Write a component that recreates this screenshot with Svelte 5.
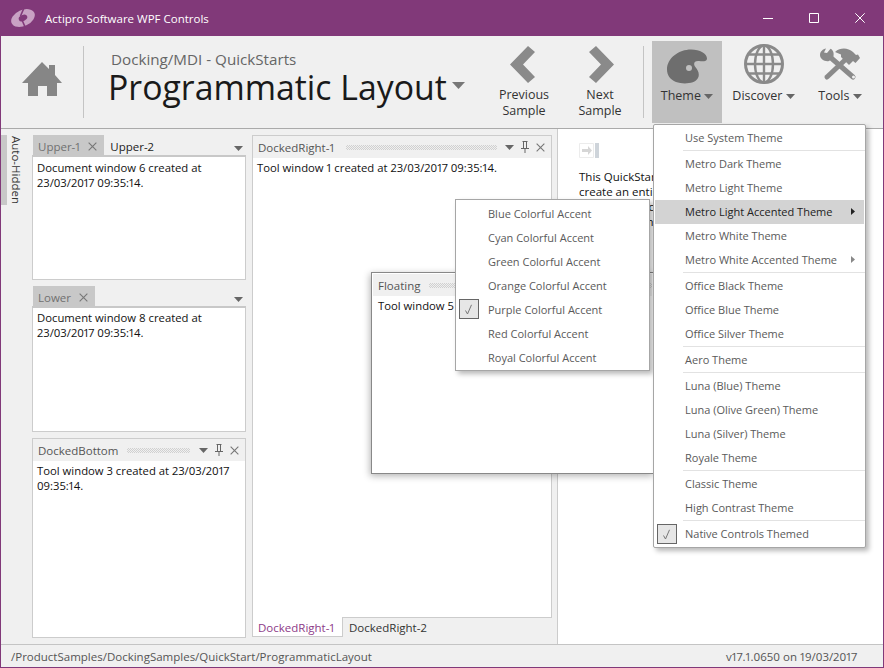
<script>
	const themeGroups = [
		[{ label: 'Use System Theme' }],
		[
			{ label: 'Metro Dark Theme' },
			{ label: 'Metro Light Theme' },
			{ label: 'Metro Light Accented Theme', sub: true, active: true },
			{ label: 'Metro White Theme' },
			{ label: 'Metro White Accented Theme', sub: true }
		],
		[{ label: 'Office Black Theme' }, { label: 'Office Blue Theme' }, { label: 'Office Silver Theme' }],
		[{ label: 'Aero Theme' }],
		[
			{ label: 'Luna (Blue) Theme' },
			{ label: 'Luna (Olive Green) Theme' },
			{ label: 'Luna (Silver) Theme' },
			{ label: 'Royale Theme' }
		],
		[{ label: 'Classic Theme' }, { label: 'High Contrast Theme' }],
		[{ label: 'Native Controls Themed', checked: true }]
	];

	const accents = [
		{ label: 'Blue Colorful Accent' },
		{ label: 'Cyan Colorful Accent' },
		{ label: 'Green Colorful Accent' },
		{ label: 'Orange Colorful Accent' },
		{ label: 'Purple Colorful Accent', checked: true },
		{ label: 'Red Colorful Accent' },
		{ label: 'Royal Colorful Accent' }
	];
</script>

{#snippet caret()}
	<svg class="caret" width="9" height="5" viewBox="0 0 9 5"><path d="M0 0h9L4.500 5z" /></svg>
{/snippet}

{#snippet pin()}
	<svg class="glyph" width="10" height="12" viewBox="0 0 10 12">
		<path d="M2.500 .5h5M3.500 .5v7M6.500 .5v7M1 7.500h8M5 7.500V12" fill="none" stroke="#666" />
	</svg>
{/snippet}

{#snippet cross(size)}
	<svg class="glyph" width={size} height={size} viewBox="0 0 10 10">
		<path d="M.7 .7l8.600 8.600M9.300 .7L.7 9.300" fill="none" stroke="#777" stroke-width="1.200" />
	</svg>
{/snippet}

{#snippet toolTitle(name, grip)}
	<div class="tool-title">
		<span class="tool-name">{name}</span>
		<span class="grip" style="width: {grip}px"></span>
		<span class="tool-btns">
			{@render caret()}
			{@render pin()}
			{@render cross(9)}
		</span>
	</div>
{/snippet}

{#snippet check()}
	<span class="check">
		<svg width="10" height="11" viewBox="0 0 10 11"><path d="M1.500 6.500l2 3.500L7.500 .8" fill="none" stroke="#777" /></svg>
	</span>
{/snippet}

<div class="window">
	<header class="titlebar">
		<svg class="logo" width="26" height="22" viewBox="0 0 26 22">
			<ellipse cx="13" cy="11" rx="12.500" ry="8" transform="rotate(-25 13 11)" fill="#c9a2c4" />
			<ellipse cx="13" cy="11" rx="4.500" ry="3" transform="rotate(-25 13 11)" fill="#813979" />
			<path d="M14 1L10.500 9M12 13L15.500 21" fill="none" stroke="#813979" stroke-width="1.600" />
		</svg>
		<span class="app-title">Actipro Software WPF Controls</span>
		<div class="win-btns">
			<svg width="10" height="10" viewBox="0 0 10 10"><path d="M0 5.500h10" stroke="#fff" /></svg>
			<svg width="10" height="10" viewBox="0 0 10 10"><path d="M.5 .5h9v9h-9z" fill="none" stroke="#fff" /></svg>
			<svg width="10" height="10" viewBox="0 0 10 10"><path d="M.3 .3l9.400 9.400M9.700 .3L.3 9.700" stroke="#fff" /></svg>
		</div>
	</header>

	<div class="toolbar">
		<button class="home" aria-label="Home">
			<svg width="40" height="34" viewBox="0 0 40 34">
				<path fill="#868686" d="M20 0L27 7V3h6v10l7 8h-5v13H25V24h-9v10H6V21H0z" />
			</svg>
		</button>
		<div class="vsep"></div>
		<div class="heading">
			<div class="subtitle">Docking/MDI - QuickStarts</div>
			<div class="title">Programmatic Layout<svg width="13" height="7" viewBox="0 0 13 7"><path fill="#777" d="M0 0h13L6.500 7z" /></svg></div>
		</div>
		<div class="nav">
			<div class="nav-btn">
				<svg class="prev" width="25" height="37" viewBox="0 0 25 37"><path fill="#8a8a8a" d="M18 0l7 6-12 12.500L25 31l-7 6L0 18.500z" /></svg>
				<span>Previous<br />Sample</span>
			</div>
			<div class="nav-btn">
				<svg class="next" width="25" height="37" viewBox="0 0 25 37"><path fill="#8a8a8a" d="M7 0L0 6l12 12.500L0 31l7 6 18-18.500z" /></svg>
				<span>Next<br />Sample</span>
			</div>
		</div>
		<div class="vsep second"></div>
		<div class="drops">
			<div class="drop open">
				<svg width="40" height="35" viewBox="0 0 40 35" class="top-icon">
					<path fill="#6e6e6e" fill-rule="evenodd" d="M24 .5C33 .5 40 4.500 40 9.500C40 13 35 12.500 32 12C27.500 11.500 26 14.500 28 17.500C31 21 33 25 31 29C28 35 16 35.500 9 33C3 30.500 0 26 0 20.500C0 9 12 .5 24 .5ZM22 16a3 3 0 100 6 3 3 0 000-6Z" />
				</svg>
				<span class="drop-label">Theme {@render caret()}</span>
			</div>
			<div class="drop">
				<svg width="40" height="40" viewBox="0 0 40 40" class="top-icon globe">
					<g fill="none" stroke="#8a8a8a" stroke-width="2.400">
						<circle cx="20" cy="20" r="18.500" stroke-width="3" />
						<ellipse cx="20" cy="20" rx="9" ry="18.500" />
						<path d="M20 1.500v37M1.500 20h37M4.500 10.500h31M4.500 29.500h31" />
					</g>
				</svg>
				<span class="drop-label">Discover {@render caret()}</span>
			</div>
			<div class="drop">
				<svg width="40" height="33" viewBox="0 0 40 33" class="top-icon tools">
					<g fill="none" stroke="#8a8a8a" stroke-width="5" stroke-linecap="round">
						<path d="M7 29L25 12" />
						<path d="M10 9L33 29" />
					</g>
					<path fill="#8a8a8a" d="M15 4C21 -1 28 0 33 4L36 7L38 6.500L40 10L35.500 15L33 13L29 17L21 9L21 6.500C19 5.500 17 5 15 4Z" />
					<path fill="#8a8a8a" d="M6 .5C3 1 0 3.500 0 7C0 11 5 14 9 13L13 10C14.500 6 13.500 2 10.500 .8L7 5L4 4.500Z" />
					<circle cx="33.500" cy="29" r="1.500" fill="#f0f0f0" />
				</svg>
				<span class="drop-label">Tools {@render caret()}</span>
			</div>
		</div>
	</div>

	<main class="body">
		<div class="rail"><span>Auto-Hidden</span></div>

		<div class="left">
			<section class="pane upper">
				<div class="tabs">
					<div class="tab on">Upper-1 {@render cross(9)}</div>
					<div class="tab">Upper-2</div>
					<span class="tabs-end">{@render caret()}</span>
				</div>
				<div class="doc">Document window 6 created at 23/03/2017 09:35:14.</div>
			</section>
			<section class="pane lower">
				<div class="tabs">
					<div class="tab on">Lower {@render cross(9)}</div>
					<span class="tabs-end">{@render caret()}</span>
				</div>
				<div class="doc">Document window 8 created at 23/03/2017 09:35:14.</div>
			</section>
			<section class="tool bottom">
				{@render toolTitle('DockedBottom', 63)}
				<div class="tool-body">Tool window 3 created at 23/03/2017 09:35:14.</div>
			</section>
		</div>

		<div class="center">
			<section class="tool right-tool">
				{@render toolTitle('DockedRight-1', 151)}
				<div class="tool-body">Tool window 1 created at 23/03/2017 09:35:14.</div>
			</section>
			<div class="bottom-tabs">
				<div class="btab on">DockedRight-1</div>
				<div class="btab">DockedRight-2</div>
			</div>
		</div>

		<div class="info">
			<svg width="21" height="15" viewBox="0 0 21 15">
				<path fill="#fff" stroke="#ececec" d="M.5 .5h14v14H.5z" />
				<path fill="#d6d6d6" d="M3 6h6V3l4 4.500L9 12V9H3z" />
				<path fill="#ced4da" d="M16 0h4v15h-4z" />
			</svg>
			<p>This QuickStart demonstrates how to<br />create an entire layout from code-behind<br />by adding docking windows into the<br />dock site in the order of your choice.</p>
		</div>
	</main>

	<footer class="status">
		<span>/ProductSamples/DockingSamples/QuickStart/ProgrammaticLayout</span>
		<span>v17.1.0650 on 19/03/2017</span>
	</footer>

	<div class="floating">
		{@render toolTitle('Floating', 420)}
		<div class="tool-body">Tool window 5 created at 23/03/2017 09:35:14.</div>
	</div>

	<div class="menu accent-menu">
		{#each accents as item}
			<div class="item">
				{#if item.checked}{@render check()}{/if}
				<span>{item.label}</span>
			</div>
		{/each}
	</div>

	<div class="menu theme-menu">
		{#each themeGroups as group, i}
			{#if i > 0}<div class="sep"></div>{/if}
			{#each group as item}
				<div class="item" class:active={item.active}>
					{#if item.checked}{@render check()}{/if}
					<span>{item.label}</span>
					{#if item.sub}
						<svg class="arrow" width="4" height="7" viewBox="0 0 4 7"><path d="M0 0l4 3.500L0 7z" fill={item.active ? '#222' : '#888'} /></svg>
					{/if}
				</div>
			{/each}
		{/each}
	</div>
</div>

<style>
	:global(body) {
		margin: 0;
	}

	.window {
		--ui: "Open Sans", "Noto Sans", sans-serif;
		position: relative;
		box-sizing: border-box;
		width: 884px;
		height: 668px;
		display: flex;
		flex-direction: column;
		overflow: hidden;
		border: 1px solid #813979;
		border-top: 0;
		background: #f0f0f0;
		font-family: var(--ui);
		font-size: 11.3px;
		font-variant-numeric: proportional-nums;
		color: #111;
	}

	.titlebar {
		height: 36px;
		flex: none;
		margin: 0 -1px;
		display: flex;
		align-items: center;
		background: #813979;
		color: #fff;
		font-size: 11.5px;
	}

	.logo {
		margin-left: 10px;
		margin-right: 9px;
	}

	.win-btns {
		margin-left: auto;
		display: flex;
		align-items: center;
		gap: 36px;
		margin-right: 19px;
	}

	.toolbar {
		height: 93px;
		flex: none;
		box-sizing: border-box;
		display: flex;
		align-items: flex-start;
		border-bottom: 1px solid #aaa;
	}

	.home {
		margin: 26px 0 0 21px;
		padding: 0;
		border: 0;
		background: none;
		display: block;
		width: 40px;
		height: 34px;
	}

	.vsep {
		width: 1px;
		height: 72px;
		margin: 10px 0 0 21px;
		background: #c4c4c4;
		flex: none;
	}

	.heading {
		margin-left: 25px;
		width: 372px;
		flex: none;
	}

	.subtitle {
		margin: 13px 0 0 2px;
		font-size: 15.2px;
		line-height: 20px;
		color: #666;
	}

	.title {
		font-size: 33.8px;
		line-height: 44px;
		color: #1a1a1a;
		display: flex;
		align-items: center;
		gap: 5px;
		margin: -4px 0 0 -1px;
		white-space: nowrap;
	}

	.title svg {
		margin-top: -4px;
	}

	.nav {
		display: flex;
		margin-left: 5px;
		flex: none;
	}

	.nav-btn {
		width: 76px;
		display: flex;
		flex-direction: column;
		align-items: center;
		padding-top: 10px;
		font-size: 12.5px;
		line-height: 16px;
		text-align: center;
		color: #333;
	}

	.nav-btn span {
		margin-top: 4px;
	}

	.prev {
		margin-right: 3px;
	}

	.next {
		margin-left: 2px;
	}

	.vsep.second {
		margin-left: 5px;
	}

	.drops {
		display: flex;
		gap: 6.5px;
		margin-left: 8px;
	}

	.drop {
		width: 70px;
		height: 82px;
		margin-top: 5px;
		display: flex;
		flex-direction: column;
		align-items: center;
		font-size: 12.5px;
		color: #333;
		position: relative;
	}

	.drop.open {
		background: #c0c0c0;
	}

	.top-icon {
		margin-top: 8px;
		flex: none;
	}

	.top-icon.globe {
		margin-top: 3px;
	}

	.top-icon.tools {
		margin-top: 7px;
		margin-bottom: 3px;
	}

	.drop-label {
		margin-top: 4px;
		line-height: 16px;
		white-space: nowrap;
	}

	.caret {
		fill: #666;
		vertical-align: 1px;
	}

	.body {
		flex: 1;
		min-height: 0;
		display: flex;
		align-items: stretch;
	}

	.rail {
		width: 6px;
		flex: none;
		height: 70px;
		margin-top: 6px;
		background: #c8c8c8;
		position: relative;
		margin-right: 25px;
	}

	.rail span {
		position: absolute;
		left: 7px;
		top: 0;
		height: 70px;
		writing-mode: vertical-rl;
		text-align: center;
		line-height: 17px;
		font-size: 11.5px;
		color: #333;
		white-space: nowrap;
	}

	.left {
		width: 214px;
		flex: none;
		padding-top: 6px;
		display: flex;
		flex-direction: column;
		gap: 6px;
	}

	.pane {
		display: flex;
		flex-direction: column;
		flex: none;
	}

	.upper {
		height: 145px;
	}

	.lower {
		height: 146px;
	}

	.tabs {
		height: 20px;
		flex: none;
		display: flex;
		align-items: center;
		padding-left: 1px;
		border-bottom: 2px solid #c8c8c8;
	}

	.tab {
		height: 20px;
		box-sizing: border-box;
		padding: 2px 7px 0 5px;
		display: flex;
		align-items: center;
		gap: 8px;
		font-size: 11.5px;
		color: #222;
	}

	.tab:not(.on) {
		padding-left: 6px;
	}

	.tab.on {
		background: #c8c8c8;
		color: #707070;
	}

	.tabs-end {
		margin-left: auto;
		margin-right: 3px;
		padding-top: 4px;
	}

	.doc,
	.tool-body {
		flex: 1;
		min-height: 0;
		background: #fff;
		padding: 2px 4px;
		line-height: 15px;
	}

	.doc {
		border: 1px solid #ccc;
		border-top: 0;
	}

	.upper .doc {
		padding-top: 3px;
	}

	.tool {
		box-sizing: border-box;
		display: flex;
		flex-direction: column;
		border: 1px solid #ccc;
		flex: none;
	}

	.bottom {
		height: 200px;
	}

	.tool-title {
		height: 22px;
		flex: none;
		display: flex;
		align-items: center;
		padding-left: 5px;
		font-size: 11.5px;
		color: #555;
		background: #f0f0f0;
		white-space: nowrap;
		overflow: hidden;
	}

	.grip {
		height: 5px;
		margin-left: 9px;
		flex: none;
		background: repeating-conic-gradient(#d0d0d0 0 25%, transparent 0 50%) 0 0 / 2px 2px;
	}

	.right-tool .grip {
		margin-left: 12px;
	}

	.tool-btns {
		margin-left: auto;
		display: flex;
		align-items: center;
		gap: 6px;
		padding-right: 6px;
	}

	.center {
		width: 306px;
		flex: none;
		margin-left: 6px;
		padding: 6px 6px 0 0;
		box-sizing: border-box;
		border-right: 1px solid #ccc;
		display: flex;
		flex-direction: column;
	}

	.right-tool {
		height: 483px;
		width: 300px;
	}

	.bottom-tabs {
		display: flex;
		height: 20px;
		margin-top: -1px;
		width: 300px;
		font-size: 11.5px;
	}

	.btab {
		padding: 0 6px;
		line-height: 21px;
		color: #333;
	}

	.btab.on {
		box-sizing: border-box;
		height: 20px;
		background: #fff;
		color: #8d3a88;
		border: 1px solid #ccc;
		border-top: 0;
		padding: 0 5px;
		width: 91px;
	}

	.info {
		flex: 1;
		background: #fff;
		padding: 14px 0 0 21px;
		white-space: nowrap;
		overflow: hidden;
		font-size: 11.5px;
	}

	.info p {
		margin: 8px 0 0;
		line-height: 15px;
	}

	.status {
		height: 23px;
		flex: none;
		box-sizing: border-box;
		display: flex;
		justify-content: space-between;
		align-items: center;
		padding: 0 26px 0 10px;
		background: #f0f0f0;
		border-top: 1px solid #c4c4c4;
		font-size: 11.5px;
		color: #555;
	}

	.floating {
		position: absolute;
		left: 370px;
		top: 272px;
		width: 283px;
		height: 202px;
		box-sizing: border-box;
		background: #fff;
		border: 1px solid #888;
		box-shadow: -1px 2px 7px rgba(0, 0, 0, 0.3);
		padding: 1px;
		white-space: nowrap;
	}

	.floating .tool-body {
		padding-left: 5px;
	}

	.menu {
		position: absolute;
		box-sizing: border-box;
		background: #fff;
		border: 1px solid #a6a6a6;
		box-shadow: 3px 3px 5px rgba(0, 0, 0, 0.28);
		padding: 2px 0;
		font-size: 11px;
		color: #5a5a5a;
	}

	.accent-menu {
		left: 454px;
		top: 199px;
		width: 195px;
		height: 172px;
	}

	.theme-menu {
		left: 652px;
		top: 124px;
		width: 213px;
		height: 424px;
		padding: 1px 0;
		border-radius: 2px;
	}

	.item {
		position: relative;
		box-sizing: border-box;
		height: 24px;
		margin: 0 1px;
		display: flex;
		align-items: center;
		padding: 0 0 2px 31px;
		white-space: nowrap;
	}

	.theme-menu .item {
		padding-left: 30px;
	}

	.item.active {
		background: #d3d3d3;
		color: #222;
	}

	.arrow {
		position: absolute;
		right: 9px;
		top: 8px;
	}

	.sep {
		height: 1px;
		margin: 0 0 1px 29px;
		background: #e2e2e2;
	}

	.check {
		position: absolute;
		left: 2px;
		top: 2px;
		box-sizing: border-box;
		width: 20px;
		height: 20px;
		display: flex;
		align-items: center;
		justify-content: center;
		background: #e6e6e6;
		border: 1px solid #666;
	}

	.accent-menu .check {
		top: 1px;
	}
</style>
